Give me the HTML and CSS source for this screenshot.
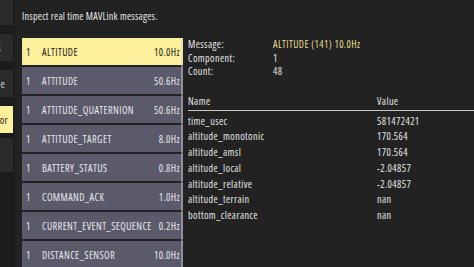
FILE: index.html
```html
<!DOCTYPE html>
<html>
<head>
<meta charset="utf-8">
<link rel="stylesheet" href="styles.css">
</head>
<body>
<div class="app">
  <nav class="sidebar">
    <div class="navbtn first"><span>Log Download</span></div>
    <div class="navbtn"><span>GeoTag Images</span></div>
    <div class="navbtn"><span>MAVLink Console</span></div>
    <div class="navbtn active"><span>MAVLink Inspector</span></div>
    <div class="navbtn tall"><span>Vibration</span></div>
  </nav>
  <main class="main">
    <p class="intro">Inspect real time MAVLink messages.</p>
    <div class="content">
      <div class="list">
        <div class="item selected"><span class="comp">1</span><span class="name">ALTITUDE</span><span class="rate">10.0Hz</span></div>
        <div class="item"><span class="comp">1</span><span class="name">ATTITUDE</span><span class="rate">50.6Hz</span></div>
        <div class="item"><span class="comp">1</span><span class="name">ATTITUDE_QUATERNION</span><span class="rate">50.6Hz</span></div>
        <div class="item"><span class="comp">1</span><span class="name">ATTITUDE_TARGET</span><span class="rate">8.0Hz</span></div>
        <div class="item"><span class="comp">1</span><span class="name">BATTERY_STATUS</span><span class="rate">0.8Hz</span></div>
        <div class="item"><span class="comp">1</span><span class="name">COMMAND_ACK</span><span class="rate">1.0Hz</span></div>
        <div class="item"><span class="comp">1</span><span class="name">CURRENT_EVENT_SEQUENCE</span><span class="rate">0.2Hz</span></div>
        <div class="item"><span class="comp">1</span><span class="name">DISTANCE_SENSOR</span><span class="rate">10.0Hz</span></div>
        <div class="scrollbar"></div>
      </div>
      <section class="detail">
        <div class="info">
          <span class="label">Message:</span><span class="msg">ALTITUDE (141) 10.0Hz</span>
          <span class="label">Component:</span><span>1</span>
          <span class="label">Count:</span><span>48</span>
        </div>
        <div class="fields">
          <div class="fhead"><span>Name</span><span>Value</span></div>
          <div class="frows">
            <div class="frow"><span>time_usec</span><span>581472421</span></div>
            <div class="frow"><span>altitude_monotonic</span><span>170.564</span></div>
            <div class="frow"><span>altitude_amsl</span><span>170.564</span></div>
            <div class="frow"><span>altitude_local</span><span>-2.04857</span></div>
            <div class="frow"><span>altitude_relative</span><span>-2.04857</span></div>
            <div class="frow"><span>altitude_terrain</span><span>nan</span></div>
            <div class="frow"><span>bottom_clearance</span><span>nan</span></div>
          </div>
        </div>
      </section>
    </div>
  </main>
</div>
</body>
</html>
```
FILE: styles.css
```css
html, body {
  margin: 0;
  padding: 0;
  background: #222222;
  overflow: hidden;
}
body {
  font-family: "Open Sans", "Noto Sans", sans-serif;
  font-size: 10.2px;
  font-stretch: 75%;
  letter-spacing: 0.4px;
  color: #e6e6e6;
  width: 474px;
  height: 267px;
}
.app {
  display: flex;
  height: 267px;
}
.sidebar {
  width: 15px;
  flex: none;
  background: #1c1c1c;
  display: flex;
  flex-direction: column;
  gap: 9px;
  overflow: hidden;
}
.navbtn {
  width: 82px;
  margin-left: -69px;
  height: 27px;
  flex: none;
  background: #2b2b2b;
  display: flex;
  align-items: center;
  justify-content: center;
  white-space: nowrap;
  color: #dcdcdc;
}
.navbtn span { flex: none; }
.navbtn.first { margin-top: -2px; }
.navbtn.active {
  background: #fdf09c;
  color: #222;
}
.navbtn.tall {
  height: 34px;
  margin-top: -4px;
}
.main {
  flex: 1;
  padding-left: 7px;
  min-width: 0;
}
.intro {
  margin: 0;
  padding-top: 10px;
  height: 38px;
  box-sizing: border-box;
  line-height: 12px;
  letter-spacing: 0.2px;
}
.content {
  display: flex;
}
.list {
  position: relative;
  width: 161px;
  flex: none;
  display: flex;
  flex-direction: column;
  gap: 2px;
}
.item {
  height: 27px;
  flex: none;
  background: #5b5a6b;
  display: flex;
  align-items: center;
  padding: 0 3px 0 4px;
  white-space: nowrap;
  color: #e8e8ec;
}
.item.selected {
  background: #fdf09c;
  color: #222;
}
.comp { width: 16px; flex: none; }
.name { flex: 1; }
.rate { flex: none; }
.scrollbar {
  position: absolute;
  top: 0;
  right: 0;
  width: 2px;
  height: 240px;
  background: rgba(210, 210, 220, 0.45);
}
.detail {
  flex: 1;
  padding-left: 5px;
  min-width: 0;
}
.info {
  display: grid;
  grid-template-columns: 85px 1fr;
  line-height: 13.6px;
}
.msg { color: #e6dc8c; }
.fields {
  margin-top: 15.6px;
}
.fhead, .frow {
  display: grid;
  grid-template-columns: 189px 1fr;
  white-space: nowrap;
}
.fhead {
  line-height: 15.7px;
  border-bottom: 1px solid #c8c8c8;
  margin-right: -10px;
}
.frows {
  padding-top: 2.6px;
}
.frow {
  line-height: 15.75px;
}
```
